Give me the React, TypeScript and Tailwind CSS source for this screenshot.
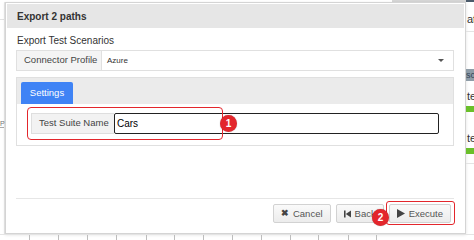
import React from "react";

const ticks = [30, 59, 88, 117, 147, 175, 204, 233, 262, 291, 319, 349, 377];

function Badge({ n }: { n: number }) {
  return (
    <div className="absolute w-[17px] h-[17px] rounded-full bg-[#e3262c] text-white text-[10px] font-bold flex items-center justify-center shadow-[0_0_1px_rgba(0,0,0,0.4)]">
      {n}
    </div>
  );
}

function Btn({ icon, label }: { icon: React.ReactNode; label: string }) {
  return (
    <button className="h-[19px] px-[7px] flex items-center gap-[4px] rounded-[2px] border border-[#d2d2d2] bg-gradient-to-b from-[#fafafa] to-[#ececec] text-[9.5px] text-[#555] leading-none whitespace-nowrap">
      {icon}
      {label}
    </button>
  );
}

export default function App() {
  return (
    <div
      className="relative w-[474px] h-[240px] bg-white overflow-hidden flex flex-col"
      style={{ fontFamily: "'Liberation Sans', Arial, sans-serif" }}
    >
      {/* page behind, top strip */}
      <div className="h-[2px] flex">
        <div className="w-[392px]" />
        <div className="w-[74px] bg-[#d6d6d6]" />
        <div className="flex-1 bg-[#4b5b6b]" />
      </div>

      <div className="flex h-[232px]">
        {/* left edge of page */}
        <div className="w-[5px] border-r border-[#e8e8e8] flex flex-col">
          <div className="h-[18px] border-b border-[#e2e2e2]" />
          <div className="mt-[100px] h-[6px] text-[7px] leading-none text-[#777]">P</div>
          <div className="h-px bg-[#aaa] mt-[1px]" />
        </div>

        {/* modal */}
        <div className="w-[461px] bg-white border border-[#d4d4d4] flex flex-col shadow-[0_1px_3px_rgba(0,0,0,0.12)]">
          <div className="h-[24px] mx-px mt-px bg-[#e6e6e6] flex items-center px-[10px] text-[10px] font-bold text-[#333] whitespace-nowrap">
            Export 2 paths
          </div>

          <div className="flex-1 flex flex-col pl-[10px] pr-[11px]">
            <div className="mt-[4px] h-[16px] flex items-center pl-px text-[10px] text-[#333] whitespace-nowrap">
              Export Test Scenarios
            </div>

            <div className="mt-[2px] h-[21px] flex border border-[#e0e0e0]">
              <div className="w-[85px] bg-[#f4f4f4] border-r border-[#e0e0e0] flex items-center pl-[7px] text-[9.5px] text-[#444] whitespace-nowrap">
                Connector Profile
              </div>
              <div className="flex-1 flex items-center justify-between pl-[5px] pr-[9px] text-[8px] text-[#333]">
                Azure
                <span className="w-0 h-0 border-l-[3px] border-r-[3px] border-t-[3px] border-l-transparent border-r-transparent border-t-[#555]" />
              </div>
            </div>

            <div className="mt-[6px] h-[69px] border border-[#e0e0e0] flex flex-col">
              <div className="h-[26px] bg-[#ebebeb] flex items-end pl-[4px]">
                <div className="w-[52px] h-[22px] bg-[#3f83f5] rounded-t-[2px] flex items-center justify-center text-[9.5px] text-white whitespace-nowrap">
                  Settings
                </div>
              </div>
              <div className="relative flex-1 px-[14px] pt-[9px]">
                <div className="h-[21px] flex">
                  <div className="w-[83px] bg-[#f2f2f2] border border-[#dedede] border-r-0 flex items-center pl-[7px] text-[9.5px] text-[#444] whitespace-nowrap">
                    Test Suite Name
                  </div>
                  <div className="flex-1 border-[1.5px] border-[#222] rounded-[2px] flex items-center pl-[2px] text-[10px] text-black">
                    Cars
                  </div>
                </div>
                <div className="absolute left-[10px] top-[3px] w-[196px] h-[33px] border-[1.5px] border-[#e3262c] rounded-[4px]" />
                <div className="absolute left-[203px] top-[11px]">
                  <Badge n={1} />
                </div>
              </div>
            </div>

            <div className="mt-[52px] h-px bg-[#e6e6e6]" />

            <div className="relative mt-[5px] flex justify-end gap-[5px] pr-[3px]">
              <Btn
                label="Cancel"
                icon={<span className="text-[9px] font-bold text-[#444] leading-none">✖</span>}
              />
              <Btn
                label="Back"
                icon={
                  <svg width="7" height="8" viewBox="0 0 8 9">
                    <rect x="0" y="0.5" width="1.8" height="8" fill="#444" />
                    <path d="M8 0.5 L2 4.5 L8 8.5 Z" fill="#444" />
                  </svg>
                }
              />
              <Btn
                label="Execute"
                icon={
                  <svg width="8" height="9" viewBox="0 0 8 9">
                    <path d="M0 0 L8 4.5 L0 9 Z" fill="#444" />
                  </svg>
                }
              />
              <div className="absolute right-[-1px] top-[-3px] w-[69px] h-[24px] border-[1.5px] border-[#e3262c] rounded-[3px]" />
              <div className="absolute left-[356px] top-[5px]">
                <Badge n={2} />
              </div>
            </div>
          </div>
        </div>

        {/* right edge of page */}
        <div className="flex-1 flex flex-col text-[11px] text-[#333] leading-none overflow-hidden whitespace-nowrap">
          <div className="mt-[12px] pl-px">at</div>
          <div className="mt-[6px] h-px bg-[#e4e4e4]" />
          <div className="mt-[37px] h-[12px] bg-[#8e9ca7] text-[9px] flex items-center text-[#345]">sc</div>
          <div className="mt-[10px] pl-px">te</div>
          <div className="mt-[4px] h-[6px] w-[8px] bg-[#6abf2a]" />
          <div className="mt-[21px] pl-px">te</div>
          <div className="mt-[4px] h-[6px] w-[8px] bg-[#6abf2a]" />
          <div className="mt-[9px] h-px bg-[#e4e4e4]" />
        </div>
      </div>

      {/* page behind, bottom grid */}
      <div className="flex-1 flex border-t border-[#e4e4e4]">
        <div className="w-[392px] flex">
          {ticks.map((x, i) => (
            <div
              key={x}
              className="h-full border-r border-[#bdbdbd]"
              style={{ width: i === 0 ? x : x - ticks[i - 1] }}
            />
          ))}
        </div>
      </div>
    </div>
  );
}
